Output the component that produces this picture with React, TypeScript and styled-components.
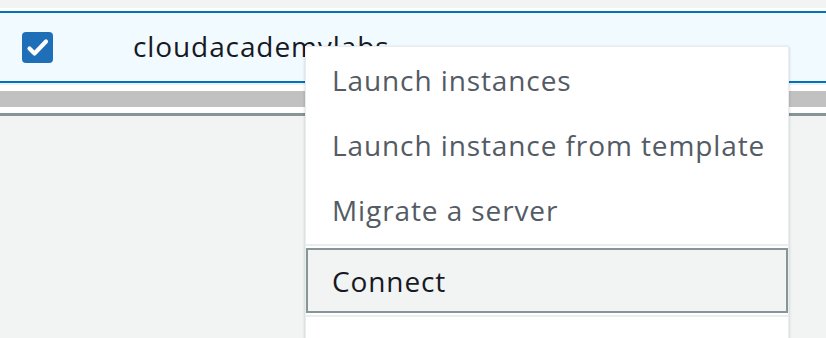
import React from 'react';
import styled, { createGlobalStyle } from 'styled-components';

const GlobalStyle = createGlobalStyle`
  html, body {
    margin: 0;
    padding: 0;
    background: #f2f3f3;
    font-family: 'Open Sans', 'Noto Sans', Arial, sans-serif;
  }
`;

const Page = styled.div`
  position: relative;
  width: 826px;
  height: 338px;
  overflow: hidden;
  display: flex;
  flex-direction: column;
  background: #f2f3f3;
`;

const TopStrip = styled.div`
  height: 8px;
  background: #f2f3f3;
  border-bottom: 3px solid #ffffff;
`;

const Row = styled.div`
  height: 68px;
  display: flex;
  align-items: center;
  background: #f1faff;
  border-top: 2px solid #0073bb;
  border-bottom: 2px solid #0073bb;
`;

const CheckCell = styled.div`
  width: 133px;
  padding-left: 22px;
  box-sizing: border-box;
  display: flex;
  align-items: center;
`;

const Checkbox = styled.div`
  width: 31px;
  height: 31px;
  border-radius: 4px;
  background: #1f6fb8;
  display: flex;
  align-items: center;
  justify-content: center;
`;

const Name = styled.span`
  font-size: 28px;
  letter-spacing: 0.9px;
  color: #16191f;
  line-height: 1;
  margin-top: -2px;
`;

const ScrollTrack = styled.div`
  height: 30px;
  background: #ffffff;
  border-top: 2px solid #f0f1f1;
  display: flex;
  flex-direction: column;
  justify-content: center;
  box-sizing: border-box;
`;

const ScrollThumb = styled.div`
  height: 16px;
  background: #c1c1c1;
`;

const PanelEdge = styled.div`
  height: 3px;
  background: #879596;
  box-shadow: 0 1px 2px rgba(0, 0, 0, 0.2);
`;

const Panel = styled.div`
  flex: 1;
  background: #f2f3f3;
`;

const Menu = styled.ul`
  position: absolute;
  left: 305px;
  top: 46px;
  width: 484px;
  margin: 0;
  padding: 0;
  list-style: none;
  background: #ffffff;
  border: 1px solid #eaeded;
  border-bottom: none;
  box-shadow: 0 1px 3px rgba(0, 22, 40, 0.2);
  height: 300px;
  box-sizing: border-box;
`;

const Item = styled.li<{ $active?: boolean }>`
  height: 65px;
  display: flex;
  align-items: center;
  padding-left: 24px;
  font-size: 28px;
  letter-spacing: 0.9px;
  line-height: 1;
  color: ${p => (p.$active ? '#16191f' : '#545b64')};
  background: ${p => (p.$active ? '#f2f3f3' : '#ffffff')};
  border: 2px solid ${p => (p.$active ? '#879596' : 'transparent')};
  box-sizing: border-box;
`;

const Divider = styled.li`
  height: 2px;
  margin: 2px 0;
  background: #eaeded;
`;

const items = ['Launch instances', 'Launch instance from template', 'Migrate a server'];

export default function App() {
  return (
    <>
      <GlobalStyle />
      <Page>
        <TopStrip />
        <Row>
          <CheckCell>
            <Checkbox>
              <svg width="31" height="31" viewBox="0 0 31 31">
                <path
                  d="M7.5 16.5l5 5L24 9.5"
                  fill="none"
                  stroke="#ffffff"
                  strokeWidth="4.2"
                  strokeLinecap="round"
                  strokeLinejoin="round"
                />
              </svg>
            </Checkbox>
          </CheckCell>
          <Name>cloudacademylabs</Name>
        </Row>
        <ScrollTrack>
          <ScrollThumb />
        </ScrollTrack>
        <PanelEdge />
        <Panel />
        <Menu>
          {items.map(label => (
            <Item key={label}>{label}</Item>
          ))}
          <Divider />
          <Item $active>Connect</Item>
          <Divider />
        </Menu>
      </Page>
    </>
  );
}
